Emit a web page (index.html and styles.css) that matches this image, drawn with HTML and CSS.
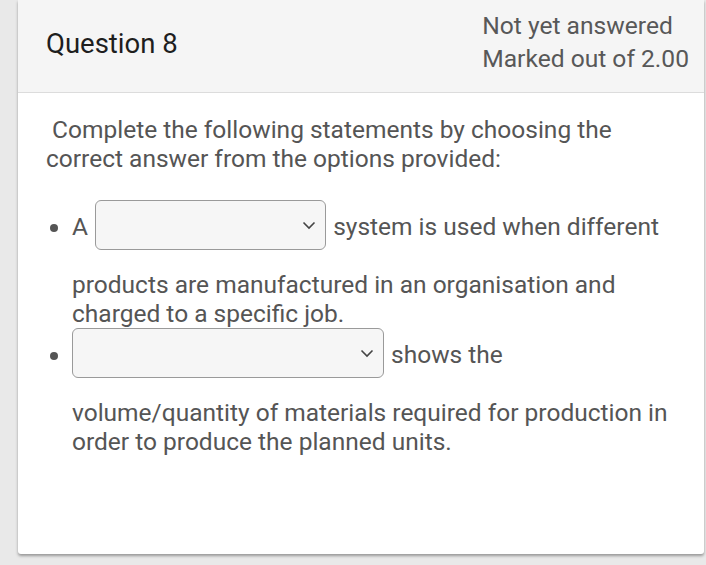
FILE: index.html
```html
<!DOCTYPE html>
<html>
<head>
<meta charset="utf-8">
<link rel="stylesheet" href="styles.css">
</head>
<body>
<div class="card">
  <div class="header">
    <h3 class="qno">Question 8</h3>
    <div class="state">
      <div>Not yet answered</div>
      <div>Marked out of 2.00</div>
    </div>
  </div>
  <div class="content">
    <p class="intro">&nbsp;Complete the following statements by choosing the correct answer from the options provided:</p>
    <ul class="list">
      <li>A <span class="select first" style="width:231px"><svg class="chev" width="14" height="9" viewBox="0 0 14 9"><path d="M1.5 1.5 L7 7 L12.5 1.5" fill="none" stroke="#444" stroke-width="1.6"/></svg></span> system is used when different products are manufactured in an organisation and charged to a specific job.</li>
      <li><span class="select" style="width:312px"><svg class="chev" width="14" height="9" viewBox="0 0 14 9"><path d="M1.5 1.5 L7 7 L12.5 1.5" fill="none" stroke="#444" stroke-width="1.6"/></svg></span> shows the volume/quantity of materials required for production in order to produce the planned units.</li>
    </ul>
  </div>
</div>
</body>
</html>
```
FILE: styles.css
```css
html, body {
  margin: 0;
  padding: 0;
}
body {
  background: #e9e9e9;
  font-family: Roboto, "Liberation Sans", sans-serif;
  width: 706px;
  height: 565px;
  overflow: hidden;
}
.card {
  margin-left: 18px;
  width: 686px;
  background: #fff;
  box-shadow: 0 2px 3px rgba(0,0,0,0.35);
  border-radius: 0 0 3px 3px;
  padding-bottom: 98px;
}
.header {
  background: #f5f5f5;
  border-bottom: 1px solid #dcdcdc;
  height: 92px;
  display: flex;
  justify-content: space-between;
  align-items: center;
  padding: 0 15px 0 28px;
}
.qno {
  margin: -6px 0 0 0;
  font-weight: 400;
  font-size: 27.5px;
  color: #1e1e1e;
}
.state {
  font-size: 24.6px;
  line-height: 33px;
  color: #585858;
  margin-top: -8px;
}
.content {
  padding: 22px 24px 0 28px;
  font-size: 24.5px;
  line-height: 29px;
  color: #555;
}
.intro {
  margin: 0 0 27px 0;
}
.list {
  margin: 0;
  padding-left: 26px;
}
.select {
  display: inline-block;
  box-sizing: border-box;
  height: 50px;
  border: 1px solid #9a9a9a;
  border-radius: 6px;
  background: #f6f6f6;
  vertical-align: -35px;
  margin: 0 1px 20px 0;
  position: relative;
}
.select.first {
  margin-left: 1px;
}
.chev {
  position: absolute;
  right: 9px;
  top: 20px;
}
```
